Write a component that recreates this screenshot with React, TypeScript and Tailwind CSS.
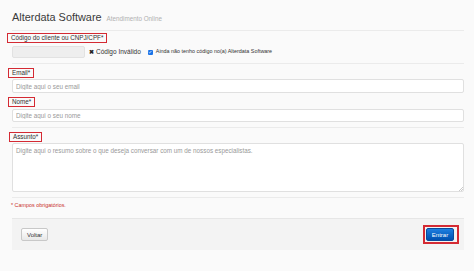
import React from 'react';

const RedBox: React.FC<{ children: React.ReactNode; className?: string }> = ({ children, className = '' }) => (
  <span className={`inline-flex items-center border-[1.5px] border-[#d42a33] px-[3px] h-[10px] text-[6.3px] leading-none text-[#333] ${className}`}>
    {children}
  </span>
);

const App: React.FC = () => {
  return (
    <div className="w-[474px] h-[271px] overflow-hidden bg-[#fafafa] text-[6px] leading-none font-['Liberation_Sans',Arial,sans-serif]">
      <div className="ml-[12px] w-[452px]">
        {/* Header */}
        <div className="pt-[10px] h-[24px] flex items-end gap-[5px] pb-[1px]">
          <span className="text-[10.9px] leading-none text-[#3a3a3a]">Alterdata Software</span>
          <span className="text-[6.3px] leading-none text-[#b0b0b0] pb-[1px]">Atendimento Online</span>
        </div>
        <div className="mt-[6px] border-t border-[#ebebeb]" />

        {/* Código */}
        <div className="mt-[2px] -ml-[5px] flex">
          <RedBox>Código do cliente ou CNPJ/CPF*</RedBox>
        </div>
        <div className="mt-[3px] flex items-center h-[12px]">
          <div className="w-[73px] h-[12px] bg-[#eeeeee] border border-[#e2e2e2] rounded-[2px]" />
          <span className="ml-[4px] text-[6.5px] leading-none text-[#333] flex items-center gap-[2px]">
            <span className="text-[6px] font-bold text-[#222]">✖</span>
            Código Inválido
          </span>
          <span className="ml-[7px] flex items-center gap-[3px]">
            <span className="w-[5px] h-[5px] rounded-[1px] bg-[#1a73e8] flex items-center justify-center">
              <svg width="4" height="4" viewBox="0 0 10 10">
                <path d="M1.5 5.2 L4 7.6 L8.6 2.4" stroke="#fff" strokeWidth="1.8" fill="none" />
              </svg>
            </span>
            <span className="text-[5.4px] leading-none text-[#333]">Ainda não tenho código no(a) Alterdata Software</span>
          </span>
        </div>
        <div className="mt-[5px] border-t border-[#ebebeb]" />

        {/* Email */}
        <div className="mt-[4px] -ml-[4px] flex">
          <RedBox>Email*</RedBox>
        </div>
        <input
          className="mt-[1px] block w-full h-[14px] px-[3px] bg-white border border-[#e0e0e0] rounded-[2px] text-[6.3px] outline-none placeholder:text-[#999]"
          placeholder="Digite aqui o seu email"
        />

        {/* Nome */}
        <div className="mt-[4px] -ml-[4px] flex">
          <RedBox>Nome*</RedBox>
        </div>
        <input
          className="mt-[2px] block w-full h-[13px] px-[3px] bg-white border border-[#e0e0e0] rounded-[2px] text-[6.3px] outline-none placeholder:text-[#999]"
          placeholder="Digite aqui o seu nome"
        />
        <div className="mt-[5px] border-t border-[#ebebeb]" />

        {/* Assunto */}
        <div className="mt-[4px] -ml-[3px] flex">
          <RedBox>Assunto*</RedBox>
        </div>
        <div className="relative mt-[1px]">
          <textarea
            className="block w-full h-[49px] px-[3px] py-[3px] bg-white border border-[#e0e0e0] rounded-[2px] text-[6.3px] leading-[8px] outline-none resize-none placeholder:text-[#999]"
            placeholder="Digite aqui o resumo sobre o que deseja conversar com um de nossos especialistas."
          />
          <svg className="absolute right-[1px] bottom-[1px]" width="5" height="5" viewBox="0 0 5 5">
            <path d="M1 5 L5 1 M3 5 L5 3" stroke="#aaa" strokeWidth="0.6" />
          </svg>
        </div>
        <div className="mt-[5px] border-t border-[#ebebeb]" />

        <div className="mt-[5px] -ml-[1px] text-[5.4px] leading-none text-[#c9302c]">* Campos obrigatórios.</div>

        {/* Footer */}
        <div className="mt-[10px] h-[32px] bg-[#f3f3f3] border-t border-[#e6e6e6] flex items-center justify-between pl-[9px] pr-[5px]">
          <button className="h-[13px] px-[5px] bg-gradient-to-b from-white to-[#e8e8e8] border border-[#c8c8c8] rounded-[2px] text-[6px] leading-none text-[#333]">
            Voltar
          </button>
          <span className="border-2 border-[#d42a33] p-[1px] pr-[3px] flex">
            <button className="h-[13px] w-[28px] bg-gradient-to-b from-[#1d7fe0] to-[#0050b0] border border-[#0a4a9a] rounded-[2px] text-[6px] leading-none text-white">
              Entrar
            </button>
          </span>
        </div>
      </div>
    </div>
  );
};

export default App;
